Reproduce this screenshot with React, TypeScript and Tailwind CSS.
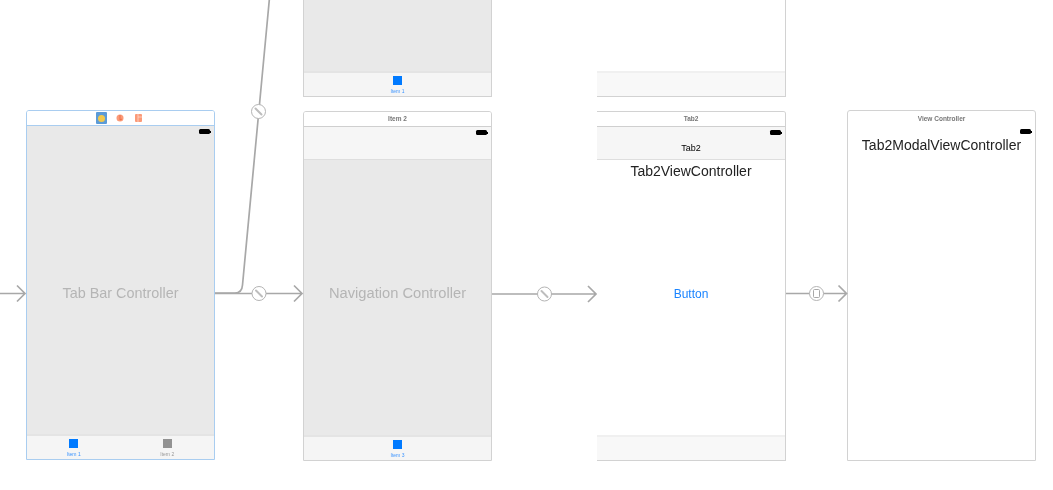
const font = "font-['Liberation_Sans',Arial,sans-serif]";

const Battery = () => (
  <div className="absolute top-[3px] right-[3px] flex items-center">
    <div className="w-[11px] h-[5px] rounded-[1.5px] bg-black" />
    <div className="w-px h-[2px] bg-black" />
  </div>
);

type TabItemProps = {
  label: string;
  active?: boolean;
};

const TabItem = ({ label, active = true }: TabItemProps) => (
  <div className="flex flex-col items-center w-[94px]">
    <div className={`w-[9px] h-[9px] ${active ? "bg-[#007aff]" : "bg-[#929292]"}`} />
    <span className={`mt-[3px] text-[5px] leading-[6px] ${active ? "text-[#3d95ff]" : "text-[#999999]"}`}>
      {label}
    </span>
  </div>
);

const TabBar = ({ children }: { children?: React.ReactNode }) => (
  <div className="h-[25px] shrink-0 border-t-2 border-[#e4e4e4] bg-[#f5f5f5] flex justify-center pt-[3px]">
    {children}
  </div>
);

const SceneHeader = ({ title }: { title: string }) => (
  <div className="h-[15px] shrink-0 border-b border-[#cfcfcf] bg-white flex items-center justify-center text-[6.5px] font-bold text-[#777777]">
    {title}
  </div>
);

const NavBar = ({ title }: { title?: string }) => (
  <div className="relative h-[33px] shrink-0 border-b border-[#dedede] bg-[#f6f6f6] flex items-end justify-center pb-[5px]">
    <Battery />
    {title && <span className="text-[9px] leading-[11px] text-black">{title}</span>}
  </div>
);

const App = () => {
  return (
    <div className={`relative w-[1053px] h-[490px] overflow-hidden bg-white blur-[0.35px] ${font}`}>
      {/* tab bar controller */}
      <div className="absolute left-[26px] top-[110px] w-[189px] h-[350px] flex flex-col border border-[#a9cdf0] rounded-t-[3px] overflow-hidden">
        <div className="h-[15px] shrink-0 border-b border-[#a9cdf0] bg-white flex items-center pl-[69px]">
          <div className="w-[11px] h-[12px] shrink-0 rounded-[1px] bg-[#5b9bd8] flex items-center justify-center">
            <div className="w-[7px] h-[7px] rounded-full bg-[#f2c94c]" />
          </div>
          <svg className="ml-[9px] shrink-0" width="8" height="8" viewBox="0 0 8 8">
            <circle cx="4" cy="4" r="3.5" fill="#fb9a78" />
            <path d="M4 1V6L6 5" fill="none" stroke="#e8643c" strokeWidth="0.8" />
          </svg>
          <svg className="ml-[11px] shrink-0" width="7" height="8" viewBox="0 0 7 8">
            <rect width="7" height="8" rx="1" fill="#fb9a78" />
            <path d="M3 0V8M3 3H7" stroke="#fde0d4" strokeWidth="0.7" />
          </svg>
        </div>
        <div className="relative flex-1 bg-[#e9e9e9] flex items-center justify-center pt-[28px]">
          <Battery />
          <span className="text-[14.4px] text-[#b5b5b5]">Tab Bar Controller</span>
        </div>
        <TabBar>
          <TabItem label="Item 1" />
          <TabItem label="Item 2" active={false} />
        </TabBar>
      </div>

      {/* item 1 navigation, cut off at the top */}
      <div className="absolute left-[303px] top-0 w-[189px] h-[97px] flex flex-col border-x border-b border-[#d2d2d2]">
        <div className="flex-1 bg-[#e9e9e9]" />
        <TabBar>
          <TabItem label="Item 1" />
        </TabBar>
      </div>

      {/* item 2 navigation */}
      <div className="absolute left-[303px] top-[111px] w-[189px] h-[350px] flex flex-col border border-[#d2d2d2] rounded-t-[3px] overflow-hidden">
        <SceneHeader title="Item 2" />
        <NavBar />
        <div className="flex-1 bg-[#e9e9e9] flex items-center justify-center pb-[8px]">
          <span className="text-[14.7px] text-[#b5b5b5]">Navigation Controller</span>
        </div>
        <TabBar>
          <TabItem label="Item 3" />
        </TabBar>
      </div>

      {/* top right of tab2 column */}
      <div className="absolute left-[597px] top-0 w-[189px] h-[97px] flex flex-col border-r border-b border-[#d2d2d2]">
        <div className="flex-1 bg-white" />
        <div className="h-[25px] shrink-0 border-t-2 border-[#f0f0f0] bg-[#f8f8f8]" />
      </div>

      {/* tab2 view controller */}
      <div className="absolute left-[597px] top-[111px] w-[189px] h-[350px] flex flex-col border-y border-r border-[#d2d2d2] rounded-tr-[3px] overflow-hidden">
        <SceneHeader title="Tab2" />
        <NavBar title="Tab2" />
        <div className="flex-1 bg-white flex flex-col items-center">
          <span className="mt-[3px] text-[14px] leading-[17px] text-[#222222]">Tab2ViewController</span>
          <span className="mt-[107px] text-[12px] leading-[14px] text-[#1a84ff]">Button</span>
        </div>
        <div className="h-[25px] shrink-0 border-t-2 border-[#f0f0f0] bg-[#f8f8f8]" />
      </div>

      {/* modal */}
      <div className="absolute left-[847px] top-[110px] w-[189px] h-[351px] flex flex-col border border-[#d2d2d2] rounded-t-[3px] bg-white">
        <div className="h-[15px] shrink-0 flex items-center justify-center text-[6.5px] font-bold text-[#777777]">
          View Controller
        </div>
        <div className="relative flex-1 flex flex-col items-center">
          <Battery />
          <span className="mt-[11px] text-[14px] leading-[17px] text-[#222222]">Tab2ModalViewController</span>
        </div>
      </div>

      {/* segues */}
      <svg className="absolute inset-0 pointer-events-none" width="1053" height="490" fill="none" stroke="#a8a8a8" strokeWidth="1.7">
        <path d="M0 293.5H25M17 285.5L25 293.5L17 301.5" />
        <path d="M215 293H235Q242 293 242.5 285L269.3 0" />
        <path d="M215 293.5H302M294 285.5L302 293.5L294 301.5" />
        <path d="M492 294H596M588 286L596 294L588 302" />
        <path d="M786 293.5H846.5M838.5 285.5L846.5 293.5L838.5 301.5" />
        <g fill="#ffffff" strokeWidth="1" stroke="#b4b4b4">
          <circle cx="258.5" cy="111.5" r="7" />
          <circle cx="259" cy="293.5" r="7" />
          <circle cx="544.5" cy="294" r="7" />
          <circle cx="816.5" cy="293.5" r="7" />
        </g>
        <g stroke="#bdbdbd" strokeWidth="2" strokeLinecap="round">
          <path d="M255.5 108.5L261.5 114.5" />
          <path d="M256 290.5L262 296.5" />
          <path d="M541.5 291L547.5 297" />
        </g>
        <rect x="813.5" y="289.5" width="6" height="8" rx="1" stroke="#a8a8a8" strokeWidth="1" />
      </svg>
    </div>
  );
};

export default App;
